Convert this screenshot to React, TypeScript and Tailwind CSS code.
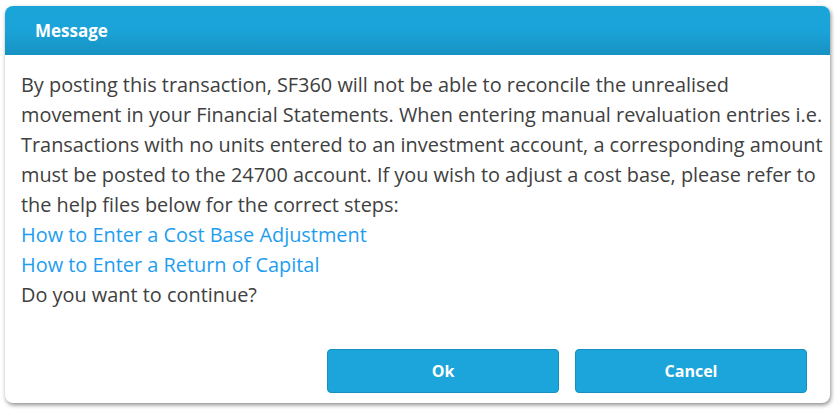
export default function App() {
  const lines = [
    "By posting this transaction, SF360 will not be able to reconcile the unrealised",
    "movement in your Financial Statements. When entering manual revaluation entries i.e.",
    "Transactions with no units entered to an investment account, a corresponding amount",
    "must be posted to the 24700 account. If you wish to adjust a cost base, please refer to",
    "the help files below for the correct steps:",
  ];
  return (
    <div className="w-[839px] h-[413px] bg-white pt-[6px] pl-[5px]" style={{ fontFamily: '"Open Sans", "Liberation Sans", sans-serif' }}>
      <div className="w-[825px] h-[397px] bg-white rounded-[8px] shadow-[1px_2px_4px_rgba(0,0,0,0.45)] flex flex-col overflow-hidden">
        <div className="h-[49px] shrink-0 bg-gradient-to-b from-[#1aa5d9] via-[#1aa3d8] to-[#1792c2] flex items-center pl-[30px]">
          <span className="text-white font-bold text-[17px]">Message</span>
        </div>
        <div className="px-[16px] pt-[15px] text-[19.9px] leading-[30px] text-[#404040] whitespace-nowrap">
          {lines.map((l) => (
            <div key={l}>{l}</div>
          ))}
          <a className="block text-[#1e9df0]">How to Enter a Cost Base Adjustment</a>
          <a className="block text-[#1e9df0]">How to Enter a Return of Capital</a>
          <div>Do you want to continue?</div>
        </div>
        <div className="mt-auto flex justify-end gap-[16px] pr-[23px] pb-[10px]">
          <button className="w-[232px] h-[44px] rounded-[4px] bg-[#1ba5da] border border-[#1590c0] text-white font-bold text-[16px]">
            Ok
          </button>
          <button className="w-[232px] h-[44px] rounded-[4px] bg-[#1ba5da] border border-[#1590c0] text-white font-bold text-[16px]">
            Cancel
          </button>
        </div>
      </div>
    </div>
  );
}
